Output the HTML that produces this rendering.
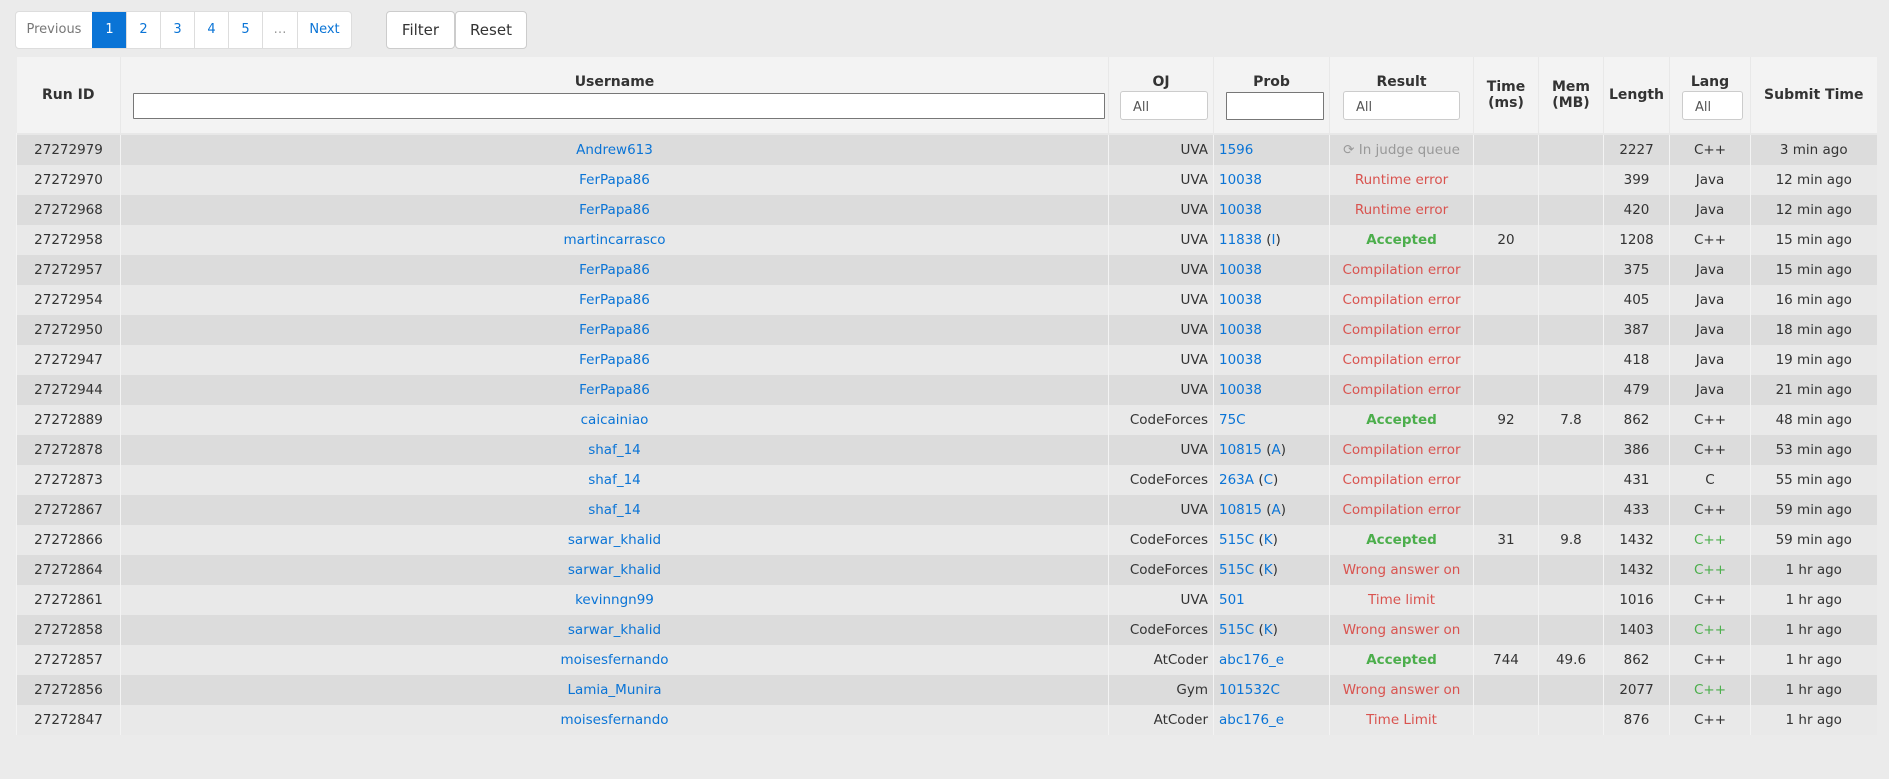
<!DOCTYPE html>
<html><head><meta charset="utf-8"><style>
body{margin:0;width:1889px;height:779px;background:#ebebeb;font-family:"DejaVu Sans","Liberation Sans",sans-serif;font-size:13.5px;color:#333;overflow:hidden;position:relative}
.pg{position:absolute;left:15px;top:11px;height:36px;display:flex;border:1px solid #ddd;border-radius:4px;background:#fff;overflow:hidden}
.pg span{display:block;height:36px;line-height:36px;text-align:center;color:#0a74d6;border-left:1px solid #ddd;font-size:13px}
.pg span:first-child{border-left:none;color:#777}
.pg .a{background:#0a74d6;color:#fff;border-color:#0a74d6}
.btn{position:absolute;top:11px;height:36px;line-height:36px;text-align:center;background:#fff;border:1px solid #ccc;border-radius:4px;font-size:15px;color:#333}
table{position:absolute;left:16px;top:57px;border-collapse:collapse;table-layout:fixed;width:1860px;z-index:1}
th{background:#f3f3f3;height:76px;font-weight:bold;font-size:14px;border-left:1px solid #e8e8e8;padding:0;vertical-align:middle;color:#333}
th .l{position:relative;top:-13px}
td{height:30px;padding:0 5px;text-align:center;border-left:1px solid #f3f3f3;white-space:nowrap;overflow:hidden}
tr.o td{background:#dcdcdc}
tr.e td{background:#e9e9e9}
td.r{text-align:right}td.lft{text-align:left}
a,.b{color:#0a74d6}
.k{color:#333}
.re{color:#d9534f}.ac{color:#4cae4c;font-weight:bold}.q{color:#999}.g{color:#4cae4c}
.inp{position:absolute;z-index:2;background:#fff;border:1px solid #ccc;border-radius:3px;font-weight:normal;text-align:left;color:#555;font-size:13px;box-sizing:border-box;padding-left:12px;line-height:26px}
.dk{border:1px solid #777;border-radius:1px}
</style></head><body>
<div class="pg"><span style="width:76px">Previous</span><span class="a" style="width:33px">1</span><span style="width:33px">2</span><span style="width:33px">3</span><span style="width:33px">4</span><span style="width:33px">5</span><span style="width:34px;color:#999">…</span><span style="width:53px">Next</span></div>
<div class="btn" style="left:386px;width:67px">Filter</div>
<div class="btn" style="left:455px;width:70px">Reset</div>
<div class="inp dk" style="left:133px;top:93px;width:972px;height:26px"></div>
<div class="inp" style="left:1120px;top:91px;width:88px;height:29px;line-height:31px">All</div>
<div class="inp dk" style="left:1226px;top:92px;width:98px;height:28px"></div>
<div class="inp" style="left:1343px;top:91px;width:117px;height:29px;line-height:31px">All</div>
<div class="inp" style="left:1682px;top:91px;width:61px;height:29px;line-height:31px">All</div>
<table>
<colgroup><col style="width:104px"><col style="width:988px"><col style="width:105px"><col style="width:116px"><col style="width:144px"><col style="width:65px"><col style="width:65px"><col style="width:66px"><col style="width:81px"><col style="width:126px"></colgroup>
<tr><th style="border-left:none">Run ID</th><th><span class="l">Username</span></th><th><span class="l">OJ</span></th><th><span class="l">Prob</span></th><th><span class="l">Result</span></th><th>Time<br>(ms)</th><th>Mem<br>(MB)</th><th>Length</th><th><span class="l">Lang</span></th><th>Submit Time</th></tr>
<tr><td colspan="10" style="height:2px;padding:0;background:#e8e8e8"></td></tr>
<tr class="o"><td>27272979</td><td><a>Andrew613</a></td><td class="r">UVA</td><td class="lft"><a>1596</a></td><td class="q">⟳ In judge queue</td><td></td><td></td><td>2227</td><td>C++</td><td>3 min ago</td></tr>
<tr class="e"><td>27272970</td><td><a>FerPapa86</a></td><td class="r">UVA</td><td class="lft"><a>10038</a></td><td class="re">Runtime error</td><td></td><td></td><td>399</td><td>Java</td><td>12 min ago</td></tr>
<tr class="o"><td>27272968</td><td><a>FerPapa86</a></td><td class="r">UVA</td><td class="lft"><a>10038</a></td><td class="re">Runtime error</td><td></td><td></td><td>420</td><td>Java</td><td>12 min ago</td></tr>
<tr class="e"><td>27272958</td><td><a>martincarrasco</a></td><td class="r">UVA</td><td class="lft"><a>11838</a> <span class="k">(</span><a>I</a><span class="k">)</span></td><td class="ac">Accepted</td><td>20</td><td></td><td>1208</td><td>C++</td><td>15 min ago</td></tr>
<tr class="o"><td>27272957</td><td><a>FerPapa86</a></td><td class="r">UVA</td><td class="lft"><a>10038</a></td><td class="re">Compilation error</td><td></td><td></td><td>375</td><td>Java</td><td>15 min ago</td></tr>
<tr class="e"><td>27272954</td><td><a>FerPapa86</a></td><td class="r">UVA</td><td class="lft"><a>10038</a></td><td class="re">Compilation error</td><td></td><td></td><td>405</td><td>Java</td><td>16 min ago</td></tr>
<tr class="o"><td>27272950</td><td><a>FerPapa86</a></td><td class="r">UVA</td><td class="lft"><a>10038</a></td><td class="re">Compilation error</td><td></td><td></td><td>387</td><td>Java</td><td>18 min ago</td></tr>
<tr class="e"><td>27272947</td><td><a>FerPapa86</a></td><td class="r">UVA</td><td class="lft"><a>10038</a></td><td class="re">Compilation error</td><td></td><td></td><td>418</td><td>Java</td><td>19 min ago</td></tr>
<tr class="o"><td>27272944</td><td><a>FerPapa86</a></td><td class="r">UVA</td><td class="lft"><a>10038</a></td><td class="re">Compilation error</td><td></td><td></td><td>479</td><td>Java</td><td>21 min ago</td></tr>
<tr class="e"><td>27272889</td><td><a>caicainiao</a></td><td class="r">CodeForces</td><td class="lft"><a>75C</a></td><td class="ac">Accepted</td><td>92</td><td>7.8</td><td>862</td><td>C++</td><td>48 min ago</td></tr>
<tr class="o"><td>27272878</td><td><a>shaf_14</a></td><td class="r">UVA</td><td class="lft"><a>10815</a> <span class="k">(</span><a>A</a><span class="k">)</span></td><td class="re">Compilation error</td><td></td><td></td><td>386</td><td>C++</td><td>53 min ago</td></tr>
<tr class="e"><td>27272873</td><td><a>shaf_14</a></td><td class="r">CodeForces</td><td class="lft"><a>263A</a> <span class="k">(</span><a>C</a><span class="k">)</span></td><td class="re">Compilation error</td><td></td><td></td><td>431</td><td>C</td><td>55 min ago</td></tr>
<tr class="o"><td>27272867</td><td><a>shaf_14</a></td><td class="r">UVA</td><td class="lft"><a>10815</a> <span class="k">(</span><a>A</a><span class="k">)</span></td><td class="re">Compilation error</td><td></td><td></td><td>433</td><td>C++</td><td>59 min ago</td></tr>
<tr class="e"><td>27272866</td><td><a>sarwar_khalid</a></td><td class="r">CodeForces</td><td class="lft"><a>515C</a> <span class="k">(</span><a>K</a><span class="k">)</span></td><td class="ac">Accepted</td><td>31</td><td>9.8</td><td>1432</td><td class="g">C++</td><td>59 min ago</td></tr>
<tr class="o"><td>27272864</td><td><a>sarwar_khalid</a></td><td class="r">CodeForces</td><td class="lft"><a>515C</a> <span class="k">(</span><a>K</a><span class="k">)</span></td><td class="re">Wrong answer on</td><td></td><td></td><td>1432</td><td class="g">C++</td><td>1 hr ago</td></tr>
<tr class="e"><td>27272861</td><td><a>kevinngn99</a></td><td class="r">UVA</td><td class="lft"><a>501</a></td><td class="re">Time limit</td><td></td><td></td><td>1016</td><td>C++</td><td>1 hr ago</td></tr>
<tr class="o"><td>27272858</td><td><a>sarwar_khalid</a></td><td class="r">CodeForces</td><td class="lft"><a>515C</a> <span class="k">(</span><a>K</a><span class="k">)</span></td><td class="re">Wrong answer on</td><td></td><td></td><td>1403</td><td class="g">C++</td><td>1 hr ago</td></tr>
<tr class="e"><td>27272857</td><td><a>moisesfernando</a></td><td class="r">AtCoder</td><td class="lft"><a>abc176_e</a></td><td class="ac">Accepted</td><td>744</td><td>49.6</td><td>862</td><td>C++</td><td>1 hr ago</td></tr>
<tr class="o"><td>27272856</td><td><a>Lamia_Munira</a></td><td class="r">Gym</td><td class="lft"><a>101532C</a></td><td class="re">Wrong answer on</td><td></td><td></td><td>2077</td><td class="g">C++</td><td>1 hr ago</td></tr>
<tr class="e"><td>27272847</td><td><a>moisesfernando</a></td><td class="r">AtCoder</td><td class="lft"><a>abc176_e</a></td><td class="re">Time Limit</td><td></td><td></td><td>876</td><td>C++</td><td>1 hr ago</td></tr>
</table>
</body></html>
